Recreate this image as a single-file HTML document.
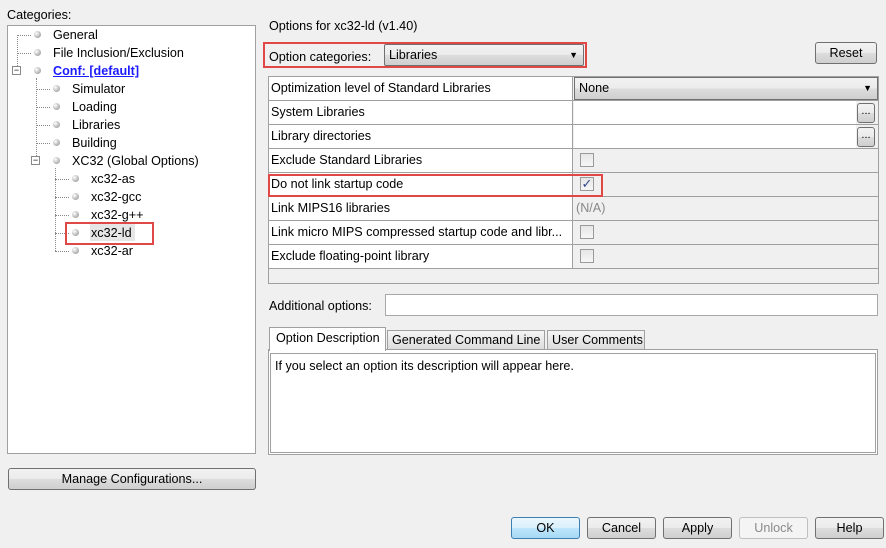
<!DOCTYPE html><html><head><style>
*{box-sizing:border-box;margin:0;padding:0}
body{width:886px;height:548px;background:#f0f0f0;font-family:"Liberation Sans",sans-serif;font-size:12.6px;color:#000;position:relative;overflow:hidden}
.a{position:absolute;white-space:nowrap}
.btn{position:absolute;height:22px;border:1px solid #707070;border-radius:3px;background:linear-gradient(#f2f2f2,#ebebeb 50%,#dddddd 50%,#cfcfcf);text-align:center;line-height:20px}
.dot{position:absolute;width:7px;height:7px;border-radius:50%;background:radial-gradient(circle at 35% 35%,#fff,#aaa 70%,#888)}
.hl{position:absolute;border-top:1px dotted #888}
.vl{position:absolute;border-left:1px dotted #888}
.row{position:absolute;left:269px;width:609px;height:24px;border-bottom:1px solid #a0a0a0}
.row .l{position:absolute;left:0;top:0;width:304px;height:23px;background:#fff;border-right:1px solid #a0a0a0;padding-left:2px;line-height:23px}
.cb{position:absolute;left:311px;top:4px;width:14px;height:14px;border:1px solid #9a9a9a;background:linear-gradient(#e6e6e6,#f6f6f6)}
</style></head><body>
<div class="a" style="left:7px;top:8px">Categories:</div>
<div class="a" style="left:7px;top:25px;width:249px;height:429px;background:#fff;border:1px solid #a0a0a0"></div>
<div class="vl" style="left:17px;top:35px;height:35px"></div>
<div class="hl" style="left:17px;top:35px;width:14px"></div>
<div class="hl" style="left:17px;top:53px;width:14px"></div>
<div class="vl" style="left:36px;top:78px;height:82px"></div>
<div class="vl" style="left:55px;top:168px;height:83px"></div>
<div class="hl" style="left:36px;top:89px;width:14px"></div>
<div class="hl" style="left:36px;top:107px;width:14px"></div>
<div class="hl" style="left:36px;top:125px;width:14px"></div>
<div class="hl" style="left:36px;top:143px;width:14px"></div>
<div class="hl" style="left:55px;top:179px;width:14px"></div>
<div class="hl" style="left:55px;top:197px;width:14px"></div>
<div class="hl" style="left:55px;top:215px;width:14px"></div>
<div class="hl" style="left:55px;top:233px;width:14px"></div>
<div class="hl" style="left:55px;top:251px;width:14px"></div>
<div class="a" style="left:12px;top:66px;width:9px;height:9px;border:1px solid #888;background:#fff;font-size:9px;line-height:6px;text-align:center">−</div>
<div class="a" style="left:31px;top:156px;width:9px;height:9px;border:1px solid #888;background:#fff;font-size:9px;line-height:6px;text-align:center">−</div>
<div class="dot" style="left:34px;top:31px"></div><div class="a" style="left:53px;top:28px">General</div>
<div class="dot" style="left:34px;top:49px"></div><div class="a" style="left:53px;top:46px">File Inclusion/Exclusion</div>
<div class="dot" style="left:34px;top:67px"></div><div class="a" style="left:53px;top:64px;color:#1b1bff;font-weight:bold;text-decoration:underline">Conf: [default]</div>
<div class="dot" style="left:53px;top:85px"></div><div class="a" style="left:72px;top:82px">Simulator</div>
<div class="dot" style="left:53px;top:103px"></div><div class="a" style="left:72px;top:100px">Loading</div>
<div class="dot" style="left:53px;top:121px"></div><div class="a" style="left:72px;top:118px">Libraries</div>
<div class="dot" style="left:53px;top:139px"></div><div class="a" style="left:72px;top:136px">Building</div>
<div class="dot" style="left:53px;top:157px"></div><div class="a" style="left:72px;top:154px">XC32 (Global Options)</div>
<div class="dot" style="left:72px;top:175px"></div><div class="a" style="left:91px;top:172px">xc32-as</div>
<div class="dot" style="left:72px;top:193px"></div><div class="a" style="left:91px;top:190px">xc32-gcc</div>
<div class="dot" style="left:72px;top:211px"></div><div class="a" style="left:91px;top:208px">xc32-g++</div>
<div class="a" style="left:90px;top:224px;width:45px;height:17px;background:#e6e6e6"></div>
<div class="dot" style="left:72px;top:229px"></div><div class="a" style="left:91px;top:226px">xc32-ld</div>
<div class="a" style="left:65px;top:222px;width:89px;height:23px;border:2px solid #e04848"></div>
<div class="dot" style="left:72px;top:247px"></div><div class="a" style="left:91px;top:244px">xc32-ar</div>
<div class="btn" style="left:8px;top:468px;width:248px">Manage Configurations...</div>

<div class="a" style="left:269px;top:19px">Options for xc32-ld (v1.40)</div>
<div class="a" style="left:263px;top:42px;width:324px;height:26px;border:2px solid #e04848"></div>
<div class="a" style="left:269px;top:50px">Option categories:</div>
<div class="btn" style="left:384px;top:44px;width:200px;text-align:left;padding-left:4px;border-radius:2px">Libraries<span style="position:absolute;right:5px;top:0;font-size:9px">▼</span></div>
<div class="btn" style="left:815px;top:42px;width:62px">Reset</div>

<div class="a" style="left:268px;top:76px;width:611px;height:208px;border:1px solid #a0a0a0;background:#f0f0f0"></div>
<div class="row" style="top:77px"><div class="l">Optimization level of Standard Libraries</div>
<div class="btn" style="left:305px;top:0;width:304px;height:23px;border-radius:0;text-align:left;padding-left:4px">None<span style="position:absolute;right:5px;top:0;font-size:9px">▼</span></div></div>
<div class="row" style="top:101px"><div class="l">System Libraries</div><div class="a" style="left:305px;top:0;width:282px;height:23px;background:#fff"></div><div class="btn" style="left:588px;top:2px;width:18px;height:20px;line-height:14px;font-size:11px">...</div></div>
<div class="row" style="top:125px"><div class="l">Library directories</div><div class="a" style="left:305px;top:0;width:282px;height:23px;background:#fff"></div><div class="btn" style="left:588px;top:2px;width:18px;height:20px;line-height:14px;font-size:11px">...</div></div>
<div class="row" style="top:149px"><div class="l">Exclude Standard Libraries</div><div class="cb"></div></div>
<div class="row" style="top:173px"><div class="l">Do not link startup code</div><div class="cb" style="color:#334a8a;font-size:13px;line-height:12px;text-align:center">✓</div></div>
<div class="row" style="top:197px"><div class="l">Link MIPS16 libraries</div><div class="a" style="left:307px;top:4px;color:#888">(N/A)</div></div>
<div class="row" style="top:221px"><div class="l">Link micro MIPS compressed startup code and libr...</div><div class="cb"></div></div>
<div class="row" style="top:245px"><div class="l">Exclude floating-point library</div><div class="cb"></div></div>
<div class="a" style="left:268px;top:174px;width:335px;height:23px;border:2px solid #e04848"></div>

<div class="a" style="left:269px;top:299px">Additional options:</div>
<div class="a" style="left:385px;top:294px;width:493px;height:22px;background:#fff;border:1px solid #a8a8a8"></div>

<div class="a" style="left:268px;top:349px;width:610px;height:106px;border:1px solid #a0a0a0;background:#fff"></div>
<div class="a" style="left:270px;top:353px;width:606px;height:100px;border:1px solid #a0a0a0"></div>
<div class="a" style="left:269px;top:327px;width:117px;height:24px;background:#fff;border:1px solid #a0a0a0;border-bottom:none;padding:3px 0 0 6px">Option Description</div>
<div class="a" style="left:387px;top:330px;width:158px;height:20px;border:1px solid #a0a0a0;background:linear-gradient(#f5f5f5,#dcdcdc);padding:2px 0 0 4px">Generated Command Line</div>
<div class="a" style="left:547px;top:330px;width:98px;height:20px;border:1px solid #a0a0a0;background:linear-gradient(#f5f5f5,#dcdcdc);padding:2px 0 0 4px">User Comments</div>
<div class="a" style="left:275px;top:359px">If you select an option its description will appear here.</div>

<div class="btn" style="left:511px;top:517px;width:69px;border-color:#3c7fb1;background:linear-gradient(#eaf6fd,#d9f0fc 50%,#bee6fd 50%,#a7d9f5)">OK</div>
<div class="btn" style="left:587px;top:517px;width:69px">Cancel</div>
<div class="btn" style="left:663px;top:517px;width:69px">Apply</div>
<div class="btn" style="left:739px;top:517px;width:69px;border-color:#bfbfbf;background:#f4f4f4;color:#8a8a8a">Unlock</div>
<div class="btn" style="left:815px;top:517px;width:69px">Help</div>
</body></html>
